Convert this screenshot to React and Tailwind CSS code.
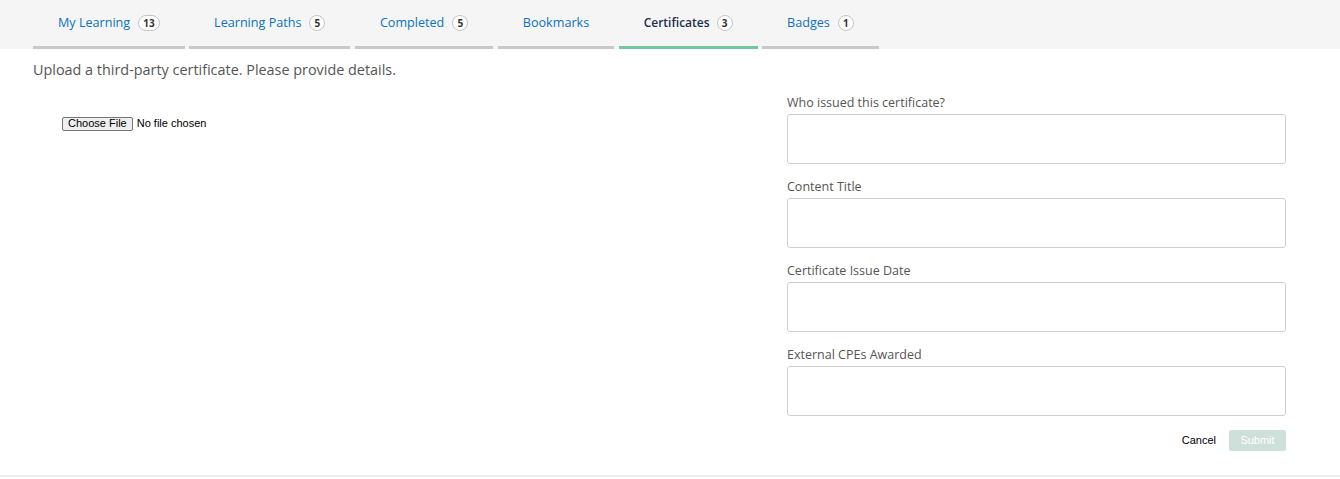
import React from 'react';

const tabs = [
  { label: 'My Learning', count: 13 },
  { label: 'Learning Paths', count: 5 },
  { label: 'Completed', count: 5 },
  { label: 'Bookmarks' },
  { label: 'Certificates', count: 3, active: true },
  { label: 'Badges', count: 1 },
];

const fields = [
  'Who issued this certificate?',
  'Content Title',
  'Certificate Issue Date',
  'External CPEs Awarded',
];

function Tab({ label, count, active }) {
  return (
    <div
      className={`h-[49px] px-[25px] flex items-center justify-center border-b-[3px] ${
        active ? 'gap-[7px] border-[#72c7a0]' : 'gap-[8px] border-[#c8c8c8]'
      }`}
    >
      <span className={active ? 'text-[12px] font-semibold text-[#1c2f4d]' : 'text-[12.6px] text-[#0b72bb]'}>{label}</span>
      {count !== undefined && (
        <span className="h-[16px] min-w-[16px] px-[4px] rounded-full border border-[#c4c4c4] bg-white flex items-center justify-center text-[10px] font-bold text-[#333] leading-none">
          {count}
        </span>
      )}
    </div>
  );
}

export default function App() {
  return (
    <div className="w-[1340px] h-[479px] bg-white overflow-hidden" style={{ fontFamily: '"Open Sans", sans-serif' }}>
      <div className="bg-[#f5f5f5] h-[49px] px-[33px] flex gap-[4.5px]">
        {tabs.map((t) => (
          <Tab key={t.label} {...t} />
        ))}
      </div>

      <div className="h-[428px] border-b-2 border-[#ececec] px-[33px]">
        <p className="pt-[11px] text-[14.4px] leading-[20px] text-[#555]">
          Upload a third-party certificate. Please provide details.
        </p>

        <div className="flex">
          <div className="flex-1 pl-[29px] pt-[36px]">
            <input
              type="file"
              className="block text-[11px] text-black leading-[14px] file:mr-[4px] file:h-[14px] file:px-[5px] file:border file:border-[#767676] file:rounded-[2px] file:bg-[#efefef] file:text-[11px] file:leading-[11px] file:text-black"
              style={{ fontFamily: '"Liberation Sans", Arial, sans-serif' }}
            />
          </div>

          <div className="w-[499px] mr-[21px] pt-[14px]">
            {fields.map((f) => (
              <div key={f} className="mb-[14px]">
                <label className="block text-[12.5px] leading-[18px] text-[#555] mb-[2px]">{f}</label>
                <input className="block w-full h-[50px] rounded-[3px] border border-[#cfcfcf] bg-white outline-none" />
              </div>
            ))}

            <div className="flex justify-end items-center gap-[13px] mt-[1px]" style={{ fontFamily: '"Liberation Sans", Arial, sans-serif' }}>
              <button className="text-[11px] text-black">Cancel</button>
              <button className="w-[57px] h-[21px] rounded-[2px] bg-[#cde0da] text-white text-[11px]">Submit</button>
            </div>
          </div>
        </div>
      </div>
    </div>
  );
}
